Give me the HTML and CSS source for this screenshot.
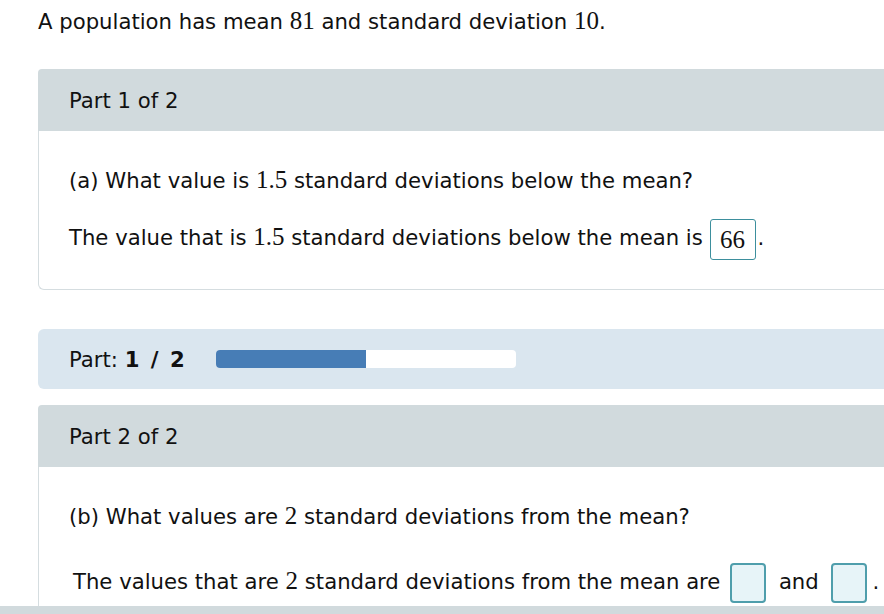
FILE: index.html
```html
<!DOCTYPE html>
<html lang="en">
  <head>
    <title>Population problem</title>
    <link rel="stylesheet" href="styles.css">
  </head>

  <body>
    <p class="intro">A population has mean <span class="math">81</span> and standard deviation <span class="math">10</span>.</p>

    <div class="card">
      <div class="card-head">Part 1 of 2</div>
      <div class="card-body">
        <p class="question">(a) What value is <span class="math">1.5</span> standard deviations below the mean?</p>
        <p class="answer">The value that is <span class="math">1.5</span> standard deviations below the mean is <span class="filled math">66</span><span class="dot">.</span></p>
      </div>
    </div>

    <div class="progress">
      <span>Part: <b>1 / 2</b></span>
      <div class="bar"><div class="bar-fill" style="width: 50%"></div></div>
    </div>

    <div class="card card-two">
      <div class="card-head">Part 2 of 2</div>
      <div class="card-body">
        <p class="question">(b) What values are <span class="math">2</span> standard deviations from the mean?</p>
        <p class="answer answer-two">The values that are <span class="math">2</span> standard deviations from the mean are <span class="blank"></span> <span class="and">and</span> <span class="blank"></span><span class="dot">.</span></p>
      </div>
    </div>

    <div class="scroll-track"></div>
  </body>
</html>
```

FILE: styles.css
```css
:root {
  --head-color: #d1dadd;
  --border-color: #d5dde0;
  --panel-color: #dae6ef;
  --bar-color: #477db6;
  --input-border: #3d8f9d;
  --input-bg: #e7f4f8;
}

html, body {
  overflow: hidden;
}

body {
  margin: 0;
  padding: 0 0 0 38px;
  width: 900px;
  font-family: "DejaVu Sans", Verdana, sans-serif;
  font-size: 21.2px;
  color: #111;
  background: #fff;
}

p {
  margin: 0;
}

.math {
  font-family: "Liberation Serif", "DejaVu Serif", serif;
  font-size: 25px;
  line-height: 20px;
}

.intro {
  padding-top: 10px;
  line-height: 24px;
}

.card {
  margin-top: 35px;
}

.card-head {
  height: 62px;
  display: flex;
  align-items: center;
  padding-left: 31px;
  background: var(--head-color);
  border-radius: 4px 0 0 0;
}

.card-body {
  border: 1px solid var(--border-color);
  border-top: none;
  border-right: none;
  border-radius: 0 0 0 6px;
  padding: 38px 0 30px 30px;
}

.question {
  line-height: 24px;
  white-space: nowrap;
}

.answer {
  margin-top: 24px;
  line-height: 42px;
  height: 42px;
  white-space: nowrap;
}

.filled {
  display: inline-block;
  vertical-align: middle;
  width: 44px;
  height: 39px;
  line-height: 39px;
  text-align: center;
  border: 1px solid var(--input-border);
  border-radius: 3px;
}

.dot {
  margin-left: 2px;
}

.progress {
  margin-top: 39px;
  height: 60px;
  display: flex;
  align-items: center;
  padding-left: 31px;
  background: var(--panel-color);
  border-radius: 6px 0 0 6px;
}

.progress b {
  word-spacing: 4px;
}

.bar {
  width: 300px;
  height: 18px;
  margin-left: 31px;
  background: #fff;
  border-radius: 4px;
  overflow: hidden;
}

.bar-fill {
  height: 100%;
  background: var(--bar-color);
}

.card-two {
  margin-top: 16px;
}

.card-two .card-body {
  padding-bottom: 40px;
}

.answer-two {
  margin-top: 33px;
  line-height: 40px;
  height: 40px;
  padding-left: 4px;
}

.blank {
  display: inline-block;
  vertical-align: middle;
  width: 32px;
  height: 36px;
  margin-left: 3px;
  background: var(--input-bg);
  border: 2px solid #4f9eac;
  border-radius: 4px;
}

.and {
  margin-left: 6px;
}

.and + .blank {
  margin-left: 5px;
}

.answer-two .dot {
  margin-left: 6px;
}

.scroll-track {
  position: fixed;
  left: 0;
  right: 0;
  bottom: 0;
  height: 8px;
  background: var(--head-color);
}
```
